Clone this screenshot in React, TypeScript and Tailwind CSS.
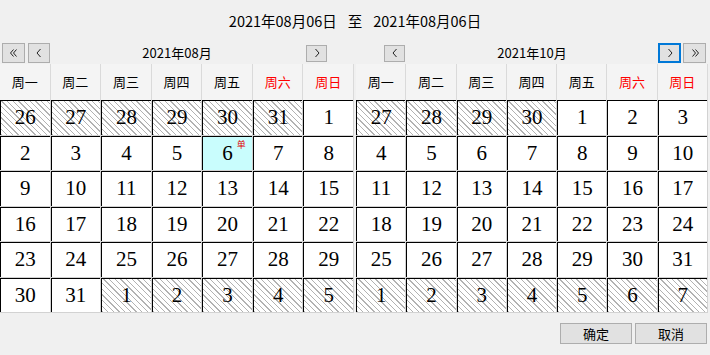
import React from 'react';

type Cell = { d: number; other: boolean };

const WEEK = ['周一', '周二', '周三', '周四', '周五', '周六', '周日'];

function buildCells(prevStart: number, prevEnd: number, days: number, next: number): Cell[] {
  const cells: Cell[] = [];
  for (let d = prevStart; d <= prevEnd; d++) cells.push({ d, other: true });
  for (let d = 1; d <= days; d++) cells.push({ d, other: false });
  for (let d = 1; d <= next; d++) cells.push({ d, other: true });
  return cells;
}

function Chevron({ dir, double }: { dir: 'left' | 'right'; double?: boolean }) {
  const flip = dir === 'right' ? 'scale(-1,1) translate(-10,0)' : undefined;
  return (
    <svg width="10" height="10" viewBox="0 0 10 10" fill="none" stroke="#222" strokeWidth="1">
      <g transform={flip}>
        {double ? (
          <>
            <polyline points="4.5,1.5 1.5,5 4.5,8.5" />
            <polyline points="7.5,1.5 4.5,5 7.5,8.5" />
          </>
        ) : (
          <polyline points="6.5,1 3,5 6.5,9" />
        )}
      </g>
    </svg>
  );
}

function NavButton({
  children,
  size,
  focused,
}: {
  children: React.ReactNode;
  size: 'big' | 'small';
  focused?: boolean;
}) {
  return (
    <button
      className={`flex items-center justify-center bg-[#e1e1e1] ${
        size === 'big' ? 'h-[20px] w-[23px]' : 'h-[17px] w-[21px]'
      } ${focused ? 'border-2 border-[#0078d7]' : 'border border-[#adadad]'}`}
    >
      {children}
    </button>
  );
}

function Calendar({
  title,
  cells,
  side,
  selected,
  width,
}: {
  title: string;
  cells: Cell[];
  side: 'left' | 'right';
  selected?: number;
  width: string;
}) {
  return (
    <div className={`flex flex-col ${width}`}>
      {/* nav */}
      <div className="flex h-[20px] items-center px-[2px]">
        <div className="flex w-[23px] justify-start">
          {side === 'left' && (
            <NavButton size="big">
              <Chevron dir="left" double />
            </NavButton>
          )}
        </div>
        <div className="ml-[3px] flex w-[22px] justify-start">
          <NavButton size={side === 'left' ? 'big' : 'small'}>
            <Chevron dir="left" />
          </NavButton>
        </div>
        <div className="flex-1 text-center text-[13px] leading-[20px] text-black">{title}</div>
        <div className="flex w-[23px] justify-end">
          <NavButton size={side === 'left' ? 'small' : 'big'} focused={side === 'right'}>
            <Chevron dir="right" />
          </NavButton>
        </div>
        <div className="ml-[2px] flex w-[23px] justify-end">
          {side === 'right' && (
            <NavButton size="big">
              <Chevron dir="right" double />
            </NavButton>
          )}
        </div>
      </div>

      {/* week header */}
      <div className="mt-[1px] grid h-[36px] grid-cols-7 gap-px bg-[#dadada] pr-px">
        {WEEK.map((w, i) => (
          <div
            key={w}
            className={`flex items-center justify-center bg-[#f4f4f4] text-[13px] ${
              i >= 5 ? 'text-[#ff0000]' : 'text-black'
            }`}
          >
            {w}
          </div>
        ))}
      </div>

      {/* days */}
      <div className="grid h-[213px] grid-cols-7 grid-rows-6 gap-px bg-[#d2d2d2] pr-px pb-px">
        {cells.map((c, i) => {
          const isSel = !c.other && c.d === selected;
          return (
            <div
              key={i}
              className={`relative flex items-center justify-center border-l border-t border-black font-['Liberation_Serif',serif] text-[21px] text-black ${
                c.other
                  ? 'bg-white bg-[repeating-linear-gradient(45deg,#b2b2b2_0px,#b2b2b2_0.8px,#ffffff_0.8px,#ffffff_4px)]'
                  : isSel
                    ? 'bg-[#c9fdfd]'
                    : 'bg-white'
              }`}
            >
              {c.d}
              {isSel && (
                <span className="absolute right-[6px] top-[3px] font-['Noto_Sans_CJK_SC',sans-serif] text-[9px] leading-none text-[#e00000]">
                  单
                </span>
              )}
            </div>
          );
        })}
      </div>
    </div>
  );
}

export default function App() {
  const aug = buildCells(26, 31, 31, 5);
  const oct = buildCells(27, 30, 31, 7);

  return (
    <div className="h-[355px] w-[710px] overflow-hidden bg-[#f0f0f0] font-['Noto_Sans_CJK_SC',sans-serif] text-black">
      <div className="flex justify-center pt-[11px] text-[14.5px] leading-[20px]">
        <span>2021年08月06日</span>
        <span className="mx-[11px]">至</span>
        <span>2021年08月06日</span>
      </div>

      <div className="mt-[12px] flex gap-[2px]">
        <Calendar title="2021年08月" cells={aug} side="left" selected={6} width="w-[354px]" />
        <Calendar title="2021年10月" cells={oct} side="right" width="w-[352px]" />
      </div>

      <div className="mt-[10px] flex justify-end gap-[3px] pr-[3px]">
        <button className="h-[21px] w-[72px] border border-[#adadad] bg-[#e1e1e1] text-[13px] leading-none">
          确定
        </button>
        <button className="h-[21px] w-[72px] border border-[#adadad] bg-[#e1e1e1] text-[13px] leading-none">
          取消
        </button>
      </div>
    </div>
  );
}
